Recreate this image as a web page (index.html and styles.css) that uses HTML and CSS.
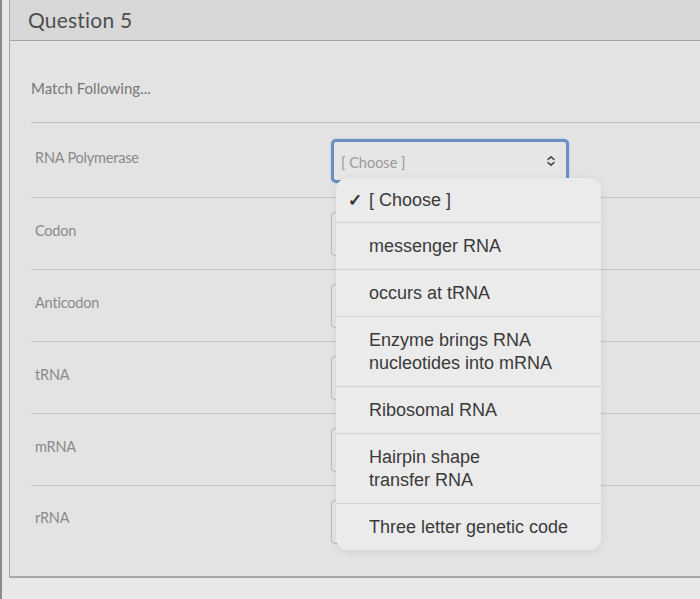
FILE: index.html
```html
<!DOCTYPE html>
<html>
<head>
<meta charset="utf-8">
<link rel="stylesheet" href="styles.css">
</head>
<body>
<div class="frame">
  <div class="header"><span class="title">Question 5</span></div>
  <div class="content">
    <p class="prompt">Match Following...</p>
    <div class="rows">
      <div class="row first">
        <span class="label">RNA Polymerase</span>
        <div class="select focused">
          <span class="ph">[ Choose ]</span>
          <svg class="chev" width="10" height="12" viewBox="0 0 10 12"><path d="M2 4.5 L5 1.8 L8 4.5 M2 7.5 L5 10.2 L8 7.5" fill="none" stroke="#444" stroke-width="1.6" stroke-linecap="round" stroke-linejoin="round"/></svg>
        </div>
      </div>
      <div class="row"><span class="label">Codon</span><div class="select"></div></div>
      <div class="row"><span class="label">Anticodon</span><div class="select"></div></div>
      <div class="row"><span class="label">tRNA</span><div class="select"></div></div>
      <div class="row"><span class="label">mRNA</span><div class="select"></div></div>
      <div class="row last"><span class="label">rRNA</span><div class="select"></div></div>
    </div>
  </div>
  <ul class="menu">
    <li class="opt checked"><span class="check">✓</span>[ Choose ]</li>
    <li class="opt">messenger RNA</li>
    <li class="opt">occurs at tRNA</li>
    <li class="opt">Enzyme brings RNA<br>nucleotides into mRNA</li>
    <li class="opt">Ribosomal RNA</li>
    <li class="opt">Hairpin shape<br>transfer RNA</li>
    <li class="opt">Three letter genetic code</li>
  </ul>
</div>
</body>
</html>
```
FILE: styles.css
```css
html, body { margin: 0; padding: 0; }
body {
  width: 700px;
  height: 599px;
  overflow: hidden;
  background: #e8e8e8;
  border-left: 2px solid #8a8a8a;
  box-sizing: border-box;
  font-family: Lato, "Liberation Sans", sans-serif;
}
.frame {
  position: relative;
  margin-left: 7px;
  width: 700px;
  height: 578px;
  border-left: 1px solid #a9a9a9;
  border-bottom: 2px solid #a8a8a8;
  box-sizing: border-box;
  background: #e3e3e3;
}
.header {
  height: 41px;
  background: #d8d8d8;
  border-bottom: 1px solid #a3a3a3;
  box-sizing: border-box;
  padding-left: 18px;
  display: flex;
  align-items: center;
}
.title {
  font-size: 21px;
  color: #4e4e4e;
  letter-spacing: 0.2px;
  margin-top: -2px;
}
.content {
  padding-left: 21px;
}
.prompt {
  margin: 0;
  height: 82px;
  line-height: 16px;
  padding-top: 39px;
  box-sizing: border-box;
  font-size: 15px;
  color: #777;
  border-bottom: 1px solid #bdbdbd;
}
.row {
  height: 72px;
  display: flex;
  align-items: center;
  border-bottom: 1px solid #c6c6c6;
  box-sizing: border-box;
}
.row.first { height: 75px; padding-top: 2px; }
.row.last { border-bottom: none; height: 90px; align-items: flex-start; padding-top: 14px; }
.label {
  width: 300px;
  padding-left: 4px;
  margin-top: -7px;
  box-sizing: border-box;
  font-size: 14.5px;
  color: #8a8a8a;
  letter-spacing: -0.2px;
}
.row.last .label { padding-top: 12px; margin-top: -3px; }
.select {
  width: 238px;
  height: 44px;
  border: 1px solid #b8b8b8;
  border-radius: 4px;
  box-sizing: border-box;
  background: #e6e6e6;
  display: flex;
  align-items: center;
  justify-content: space-between;
  padding: 0 14px 0 9px;
}
.select.focused {
  border: 3px solid #6b8fc3;
  border-radius: 5px;
  padding-left: 7px;
  padding-right: 10px;
  box-shadow: 0 0 2px rgba(80,120,190,0.4);
}
.ph {
  font-size: 14.5px;
  color: #9a9a9a;
  margin-top: 2px;
}
.chev { display: block; }
.menu {
  position: absolute;
  left: 326px;
  top: 178px;
  width: 265px;
  margin: 0;
  padding: 0;
  list-style: none;
  background: #ebebeb;
  border-radius: 12px;
  box-shadow: 0 2px 10px rgba(0,0,0,0.08);
  overflow: hidden;
  font-family: "Liberation Sans", Arial, sans-serif;
  font-size: 18px;
  color: #3a3a3a;
}
.opt {
  position: relative;
  padding: 12px 10px 11px 33px;
  line-height: 23px;
  border-bottom: 1px solid #d2d2d2;
}
.opt:last-child { border-bottom: none; }
.opt.checked { padding-top: 11px; padding-bottom: 10px; }
.check {
  position: absolute;
  left: 12px;
  top: 11px;
  font-size: 17px;
  font-weight: bold;
  color: #333;
}
```
